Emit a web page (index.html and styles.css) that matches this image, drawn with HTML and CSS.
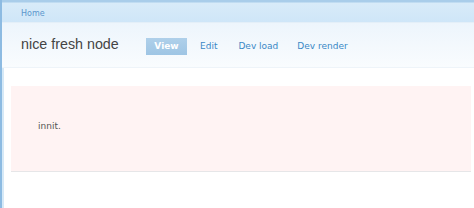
FILE: index.html
```html
<!DOCTYPE html>
<html lang="en">
<head>
    <meta charset="UTF-8">
    <title>nice fresh node</title>
    <link rel="stylesheet" href="styles.css">
</head>
<body>
    <div class="page">
        <!-- Breadcrumb -->
        <div class="breadcrumb">
            <a href="#">Home</a>
        </div>

        <!-- Title + tabs -->
        <div class="header">
            <h1 class="title">nice fresh node</h1>
            <ul class="tabs">
                <li><a href="#" class="active">View</a></li>
                <li><a href="#">Edit</a></li>
                <li><a href="#">Dev load</a></li>
                <li><a href="#">Dev render</a></li>
            </ul>
        </div>

        <!-- Content -->
        <div class="content">
            <div class="node">
                <p>innit.</p>
            </div>
        </div>
    </div>
</body>
</html>
```

FILE: styles.css
```css
/* General */
* {
    margin: 0;
    padding: 0;
    box-sizing: border-box;
}

body {
    background-color: #fff;
    font-family: "DejaVu Sans", Verdana, sans-serif;
    font-size: 9px;
    color: #555;
}

a {
    text-decoration: none;
    color: #3a88c6;
}

.page {
    min-height: 208px;
    border-left: 2px solid #8dbbe2;
    box-shadow: inset 2px 0 0 #d6e9f7;
}

/* Breadcrumb */
.breadcrumb {
    height: 23px;
    padding: 9px 0 0 19px;
    background: linear-gradient(#a9cdea 0, #a9cdea 2px, #d8ebf9 3px, #cfe6f8 22px);
    border-bottom: 1px solid #e4eff8;
    font-size: 8px;
}

.breadcrumb a {
    color: #5a96cc;
}

/* Header */
.header {
    display: flex;
    align-items: center;
    height: 45px;
    padding: 0 0 0 19px;
    background: linear-gradient(#edf5fc, #f9fcfe);
    border-bottom: 1px solid #eef4f9;
}

.title {
    font-family: "Liberation Sans", Arial, sans-serif;
    font-weight: normal;
    font-size: 14.3px;
    color: #444;
    margin-top: -3px;
    width: 125px;
}

.tabs {
    display: flex;
    list-style: none;
    align-items: center;
    margin-top: 3px;
}

.tabs a {
    display: block;
    padding: 3px 8px 4px;
    margin-right: 5px;
}

.tabs li:nth-child(3) a {
    margin-right: 3px;
}

.tabs a.active {
    background: linear-gradient(#afd0ea, #9ec5e4);
    color: #fff;
    font-weight: bold;
    width: 41px;
    text-align: center;
}

/* Content */
.content {
    padding: 18px 3px 0 9px;
}

.node {
    height: 86px;
    background-color: #fff3f3;
    border-bottom: 1px solid #e6e6e8;
    padding: 35px 0 0 27px;
}

.node p {
    color: #555;
}
```
